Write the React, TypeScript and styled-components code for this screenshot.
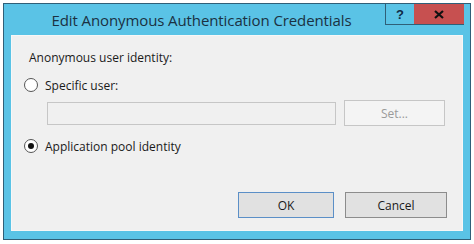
import React, { useState } from 'react';
import styled, { createGlobalStyle } from 'styled-components';

const GlobalStyle = createGlobalStyle`
  html, body {
    margin: 0;
    padding: 0;
    background: #ffffff;
  }
  body {
    font-family: "Open Sans", "Noto Sans", "Liberation Sans", sans-serif;
  }
`;

const Window = styled.div`
  margin: 3px 0 0 3px;
  width: 468px;
  height: 237px;
  box-sizing: border-box;
  border: 1px solid #2f5f78;
  background: #5ac3e6;
  display: flex;
  flex-direction: column;
`;

const TitleBar = styled.div`
  height: 31px;
  display: flex;
  align-items: flex-start;
  padding-right: 6px;
`;

const Title = styled.div`
  flex: 1;
  text-align: center;
  padding-left: 14px;
  padding-top: 6px;
  font-size: 15px;
  letter-spacing: -0.1px;
  color: #1b3142;
  white-space: nowrap;
`;

const CaptionButton = styled.button<{ $close?: boolean }>`
  width: ${p => (p.$close ? '50px' : '29px')};
  height: 21px;
  margin: 0;
  padding: 0;
  border: none;
  border-left: ${p => (p.$close ? 'none' : '1px solid #2f5f78')};
  border-bottom: 1px solid #2f5f78;
  background: ${p => (p.$close ? '#c75050' : '#5ac3e6')};
  color: ${p => (p.$close ? '#1a1a1a' : '#102a45')};
  font-family: "Liberation Sans", Arial, sans-serif;
  font-weight: bold;
  font-size: 13px;
  display: flex;
  align-items: center;
  justify-content: center;
`;

const Client = styled.div`
  flex: 1;
  margin: 0 7px 8px 7px;
  background: #f0f0f0;
  border: 1px solid #f7f7f7;
  display: flex;
  flex-direction: column;
  padding: 13px 15px 12px 17px;
  font-size: 12px;
  color: #1a1a1a;
`;

const GroupLabel = styled.div`
  margin-bottom: 10px;
`;

const RadioRow = styled.label`
  display: flex;
  align-items: center;
  gap: 7px;
  margin-left: -5px;
  height: 18px;
`;

const RadioCircle = styled.span<{ $checked?: boolean }>`
  width: 12px;
  height: 12px;
  border-radius: 50%;
  border: 1px solid #555;
  background: #fff;
  display: flex;
  align-items: center;
  justify-content: center;
  &::after {
    content: '';
    width: 6px;
    height: 6px;
    border-radius: 50%;
    background: ${p => (p.$checked ? '#111' : 'transparent')};
  }
`;

const UserRow = styled.div`
  display: flex;
  align-items: center;
  gap: 8px;
  margin: 6px 0 11px 18px;
`;

const TextBox = styled.div`
  width: 289px;
  height: 23px;
  box-sizing: border-box;
  border: 1px solid #c6c6c6;
  background: #f0f0f0;
`;

const Button = styled.button<{ $default?: boolean; $disabled?: boolean }>`
  height: 26px;
  box-sizing: border-box;
  margin: 0;
  padding: 0;
  border: 1px solid ${p => (p.$default ? '#5b8fc7' : p.$disabled ? '#c6c6c6' : '#8c8c8c')};
  background: ${p => (p.$disabled ? '#f4f4f4' : '#e1e1e1')};
  color: ${p => (p.$disabled ? '#9a9a9a' : '#1a1a1a')};
  font-family: inherit;
  font-size: 12px;
`;

const ButtonRow = styled.div`
  margin-top: auto;
  display: flex;
  justify-content: flex-end;
  gap: 11px;
`;

export default function App() {
  const [choice, setChoice] = useState<'user' | 'pool'>('pool');
  return (
    <>
      <GlobalStyle />
      <Window>
        <TitleBar>
          <Title>Edit Anonymous Authentication Credentials</Title>
          <CaptionButton>?</CaptionButton>
          <CaptionButton $close>
            <svg width="10" height="9" viewBox="0 0 10 9">
              <path d="M1 1 L9 8 M9 1 L1 8" stroke="#111" strokeWidth="2.2" />
            </svg>
          </CaptionButton>
        </TitleBar>
        <Client>
          <GroupLabel>Anonymous user identity:</GroupLabel>
          <RadioRow onClick={() => setChoice('user')}>
            <RadioCircle $checked={choice === 'user'} />
            Specific user:
          </RadioRow>
          <UserRow>
            <TextBox />
            <Button $disabled style={{ width: 101 }}>Set...</Button>
          </UserRow>
          <RadioRow onClick={() => setChoice('pool')}>
            <RadioCircle $checked={choice === 'pool'} />
            Application pool identity
          </RadioRow>
          <ButtonRow>
            <Button $default style={{ width: 96 }}>OK</Button>
            <Button style={{ width: 102 }}>Cancel</Button>
          </ButtonRow>
        </Client>
      </Window>
    </>
  );
}
